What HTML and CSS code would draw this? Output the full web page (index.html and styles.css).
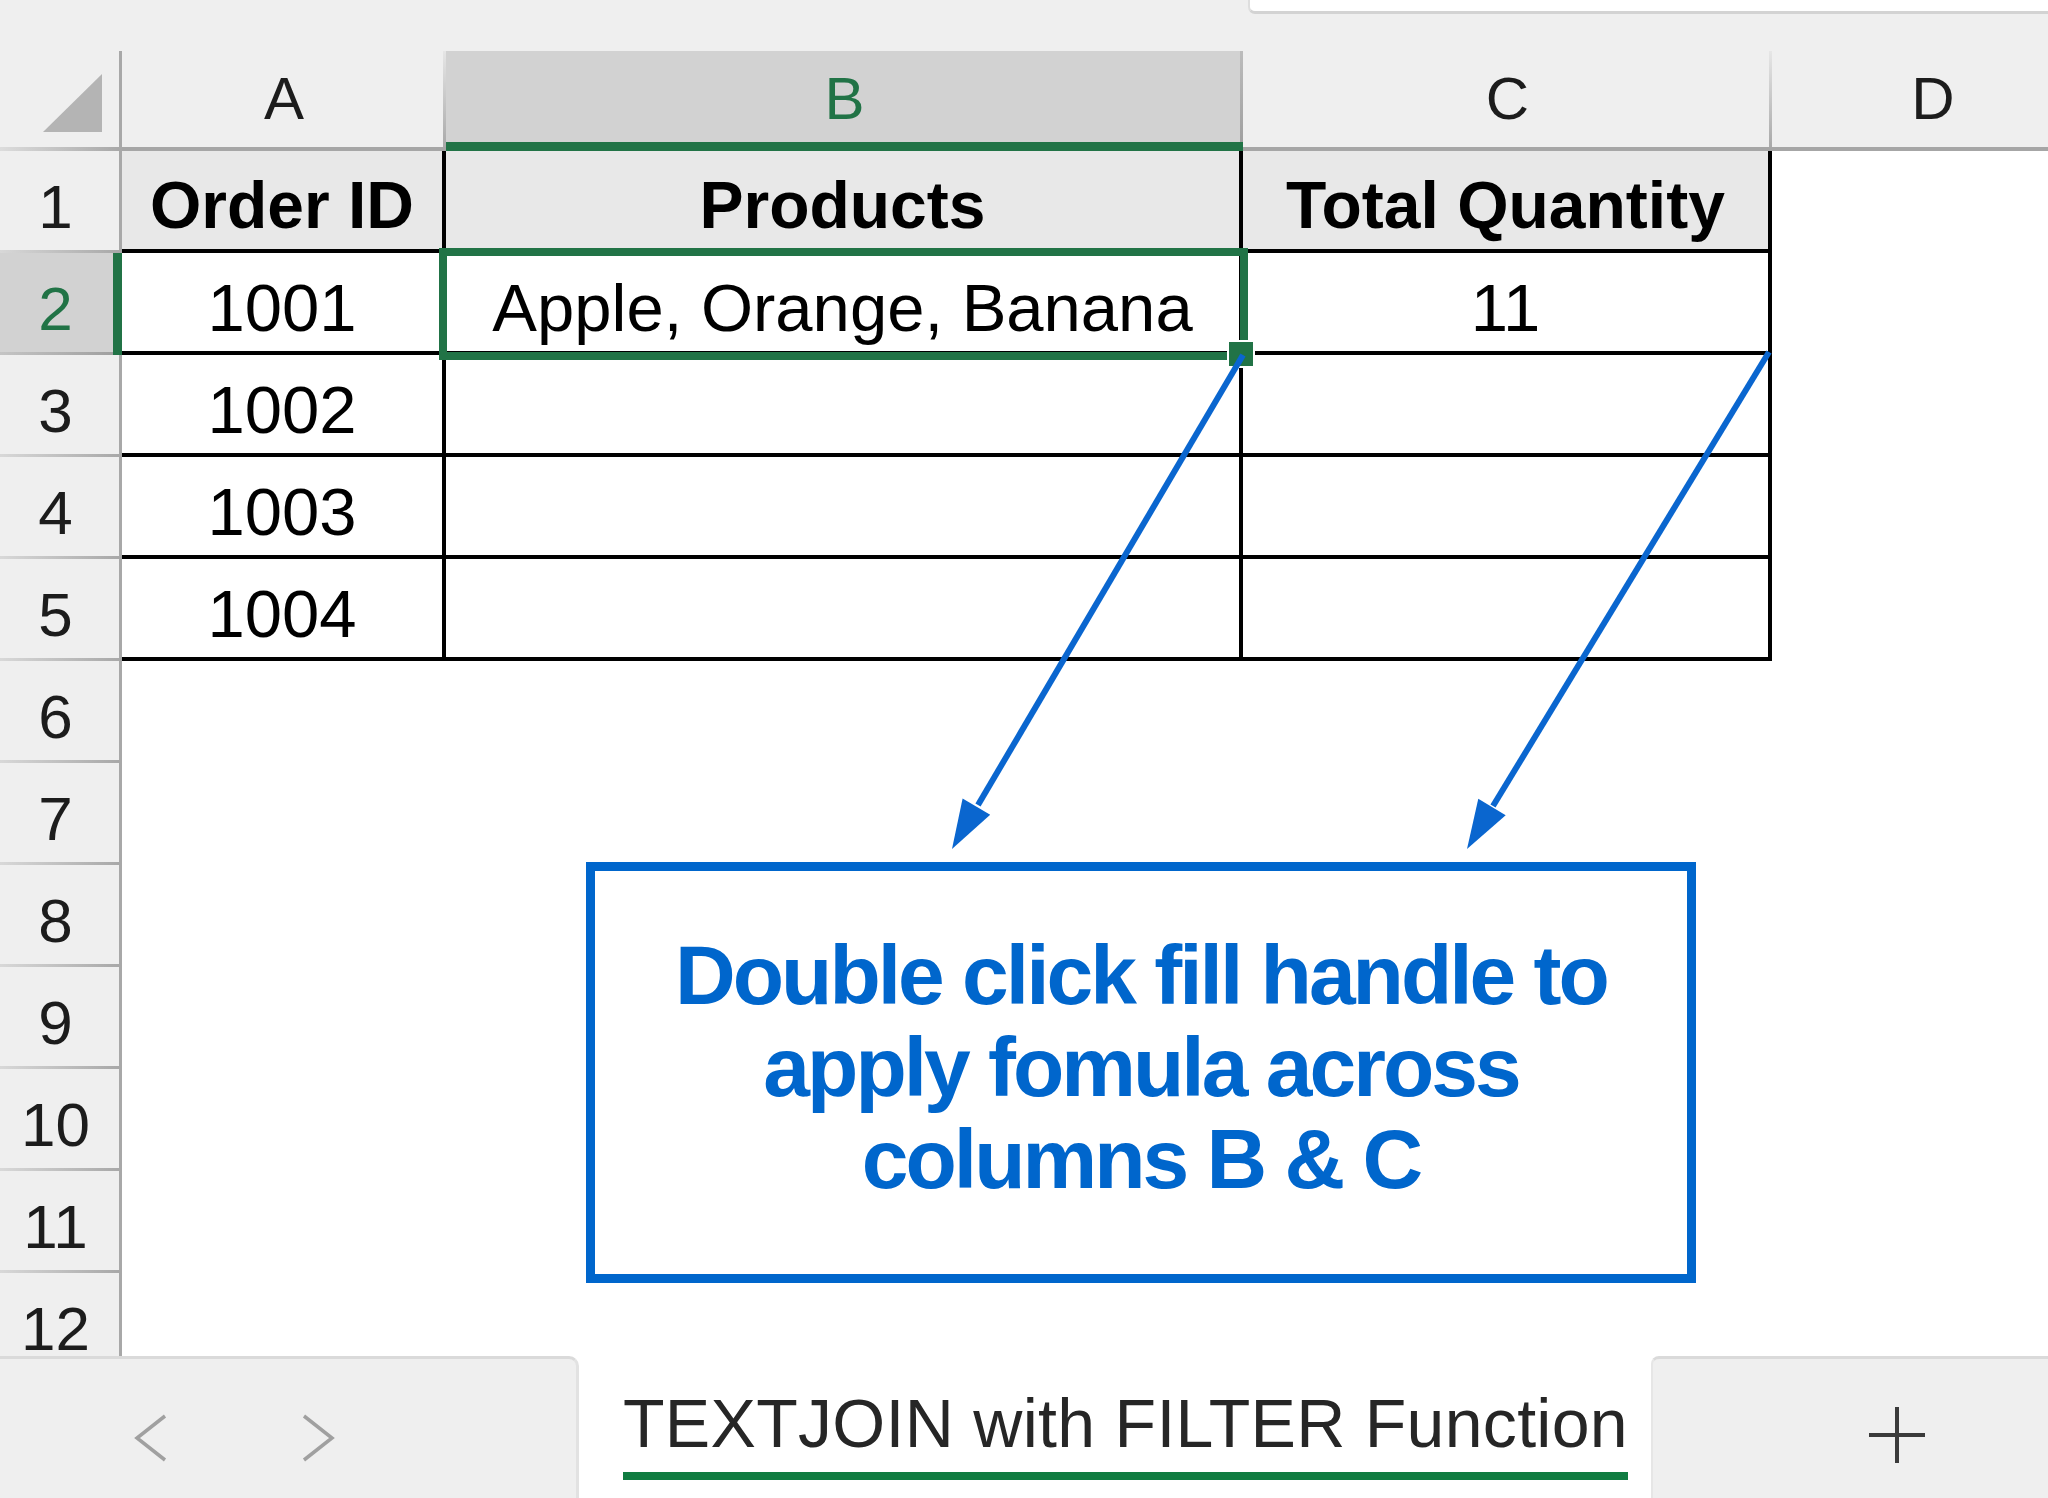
FILE: index.html
```html
<!DOCTYPE html>
<html lang="en">
<head>
<meta charset="utf-8">
<title>TEXTJOIN with FILTER Function</title>
<link rel="stylesheet" href="styles.css">
</head>
<body>
<div class="app">
  <div class="topbar">
    <div class="topbar-gap"></div>
    <div class="fx-edge"></div>
  </div>

  <div class="sheet">
    <div class="grid">
      <div class="corner">
        <svg width="59" height="58" viewBox="0 0 59 58"><polygon points="0,58 59,58 59,0" fill="#b4b4b4"/></svg>
      </div>
      <div class="colhdr">A</div>
      <div class="colhdr sel">B</div>
      <div class="colhdr">C</div>
      <div class="colhdr">D</div>

      <div class="rowhdr">1</div>
      <div class="cell th">Order ID</div>
      <div class="cell th">Products</div>
      <div class="cell th">Total Quantity</div>
      <div class="blank"></div>

      <div class="rowhdr sel">2</div>
      <div class="cell">1001</div>
      <div class="cell">Apple, Orange, Banana</div>
      <div class="cell">11</div>
      <div class="blank"></div>

      <div class="rowhdr">3</div>
      <div class="cell">1002</div>
      <div class="cell"></div>
      <div class="cell"></div>
      <div class="blank"></div>

      <div class="rowhdr">4</div>
      <div class="cell">1003</div>
      <div class="cell"></div>
      <div class="cell"></div>
      <div class="blank"></div>

      <div class="rowhdr">5</div>
      <div class="cell">1004</div>
      <div class="cell"></div>
      <div class="cell"></div>
      <div class="blank"></div>

      <div class="rowhdr">6</div><div class="blank"></div><div class="blank"></div><div class="blank"></div><div class="blank"></div>
      <div class="rowhdr">7</div><div class="blank"></div><div class="blank"></div><div class="blank"></div><div class="blank"></div>
      <div class="rowhdr">8</div><div class="blank"></div><div class="blank"></div><div class="blank"></div><div class="blank"></div>
      <div class="rowhdr">9</div><div class="blank"></div><div class="blank"></div><div class="blank"></div><div class="blank"></div>
      <div class="rowhdr">10</div><div class="blank"></div><div class="blank"></div><div class="blank"></div><div class="blank"></div>
      <div class="rowhdr">11</div><div class="blank"></div><div class="blank"></div><div class="blank"></div><div class="blank"></div>
      <div class="rowhdr">12</div><div class="blank"></div><div class="blank"></div><div class="blank"></div><div class="blank"></div>
    </div>

    <div class="selection"><div class="fill-handle"></div></div>

    <div class="callout">
      <p class="callout-text">Double click fill handle to<br>apply fomula across<br>columns B &amp; C</p>
    </div>

    <svg class="arrows" width="2048" height="1498" viewBox="0 0 2048 1498">
      <line x1="1243" y1="355" x2="978" y2="805" stroke="#0a66cf" stroke-width="6"/>
      <polygon points="952,849 962.6,798.5 990.2,814.7" fill="#0a66cf"/>
      <line x1="1769" y1="352" x2="1493" y2="806" stroke="#0a66cf" stroke-width="6"/>
      <polygon points="1467,849 1478.3,798.7 1505.7,815.3" fill="#0a66cf"/>
    </svg>
  </div>

  <div class="tabbar">
    <div class="tab-nav">
      <svg class="chev" width="36" height="48" viewBox="0 0 36 48"><polyline points="32,2 4,24 32,46" fill="none" stroke="#a0a0a0" stroke-width="3.5"/></svg>
      <svg class="chev" width="36" height="48" viewBox="0 0 36 48"><polyline points="4,2 32,24 4,46" fill="none" stroke="#a0a0a0" stroke-width="3.5"/></svg>
    </div>
    <div class="tab-active"><span class="tab-label">TEXTJOIN with FILTER Function</span></div>
    <div class="tab-rest">
      <svg class="plus" width="56" height="56" viewBox="0 0 56 56"><line x1="28" y1="0" x2="28" y2="56" stroke="#3a3a3a" stroke-width="4"/><line x1="0" y1="28" x2="56" y2="28" stroke="#3a3a3a" stroke-width="4"/></svg>
    </div>
  </div>
</div>
</body>
</html>
```

FILE: styles.css
```css
* { box-sizing: border-box; }

html, body {
  margin: 0;
  padding: 0;
}

body {
  width: 2048px;
  height: 1498px;
  overflow: hidden;
  background: #ffffff;
  font-family: "Liberation Sans", Arial, sans-serif;
  color: #000;
}

.app {
  display: flex;
  flex-direction: column;
  height: 1498px;
}

/* top strip (bottom edge of the formula bar) */
.topbar {
  flex: none;
  height: 51px;
  background: #efefef;
  display: flex;
  align-items: flex-start;
}
.topbar-gap { flex: none; width: 1248px; }
.fx-edge {
  flex: 1;
  height: 14px;
  background: #ffffff;
  border-bottom: 3px solid #d3d3d3;
  border-left: 2px solid #dedede;
  border-bottom-left-radius: 7px;
}

/* sheet */
.sheet {
  flex: 1;
  min-height: 0;
  position: relative;
  overflow: hidden;
}

.grid {
  display: grid;
  grid-template-columns: 122px 324px 797px 529px 322px;
  grid-template-rows: 100px;
  grid-auto-rows: 102px;
  width: 2094px;
}

.corner {
  background: linear-gradient(to right, #dcdcdc, #a8a8a8) left bottom / 100% 4px no-repeat, #efefef;
  border-right: 3px solid #a8a8a8;
  display: flex;
  justify-content: flex-end;
  align-items: flex-start;
  padding: 23px 17px 0 0;
}

.colhdr {
  background: linear-gradient(#e6e6e6, #a9a9a9) right top / 3px 100% no-repeat, #efefef;
  border-bottom: 4px solid #a6a6a6;
  display: flex;
  align-items: center;
  justify-content: center;
  font-size: 60px;
  line-height: 1;
  color: #1c1c1c;
}
.colhdr.sel {
  background: linear-gradient(#bcbcbc, #a0a0a0) right top / 3px 100% no-repeat, #d2d2d2;
  border-bottom: 9px solid #217346;
  padding-top: 5px;
  color: #217346;
}

.rowhdr {
  background: linear-gradient(to right, #d8d8d8, #a8a8a8) left bottom / 100% 3px no-repeat, #efefef;
  border-right: 3px solid #a8a8a8;
  display: flex;
  align-items: center;
  justify-content: center;
  padding: 10px 8px 0 0;
  font-size: 62px;
  line-height: 1;
  color: #1c1c1c;
}
.rowhdr.sel {
  background: linear-gradient(to right, #c4c4c4, #a0a0a0) left bottom / 100% 3px no-repeat, #d2d2d2;
  border-right: 9px solid #217346;
  padding-right: 2px;
  color: #217346;
}

.cell {
  border-right: 4px solid #000;
  border-bottom: 4px solid #000;
  display: flex;
  align-items: center;
  justify-content: center;
  padding-top: 10px;
  font-size: 67px;
  line-height: 1;
  white-space: nowrap;
  overflow: hidden;
}
.cell.th {
  background: #e8e8e8;
  font-weight: bold;
  font-size: 66px;
}

.blank { background: #ffffff; }

/* active cell selection (overlay) */
.selection {
  position: absolute;
  left: 439px;
  top: 197px;
  width: 809px;
  height: 112px;
  border: 8px solid #217346;
}
.fill-handle {
  position: absolute;
  left: 780px;
  top: 84px;
  width: 28px;
  height: 28px;
  background: #217346;
  border: 2px solid #ffffff;
}

/* floating text box */
.callout {
  position: absolute;
  left: 586px;
  top: 811px;
  width: 1110px;
  height: 421px;
  border: 9px solid #0066cc;
  background: #ffffff;
  display: flex;
  align-items: center;
  justify-content: center;
  padding-bottom: 12px;
}
.callout-text {
  margin: 0;
  text-align: center;
  color: #0066cc;
  font-weight: bold;
  font-size: 84px;
  line-height: 92px;
  letter-spacing: -3px;
}

.arrows {
  position: absolute;
  left: 0;
  top: -51px;
  pointer-events: none;
}

/* sheet tab bar */
.tabbar {
  flex: none;
  height: 142px;
  display: flex;
  background: #ffffff;
}
.tab-nav {
  flex: none;
  width: 579px;
  background: #efefef;
  border-top: 3px solid #dadada;
  border-right: 3px solid #e2e2e2;
  border-top-right-radius: 10px;
  display: flex;
  align-items: flex-start;
  padding: 55px 0 0 133px;
  gap: 131px;
}
.tab-active {
  flex: none;
  width: 1072px;
  background: #ffffff;
  padding: 33px 0 0 44px;
}
.tab-label {
  display: inline-block;
  font-size: 68px;
  line-height: 1;
  letter-spacing: 0.3px;
  color: #262626;
  white-space: nowrap;
  padding-bottom: 15px;
  border-bottom: 8px solid #107c41;
}
.tab-rest {
  flex: 1;
  background: #efefef;
  border-top: 3px solid #dadada;
  border-left: 2px solid #e6e6e6;
  border-top-left-radius: 8px;
  padding: 48px 0 0 216px;
}
```
